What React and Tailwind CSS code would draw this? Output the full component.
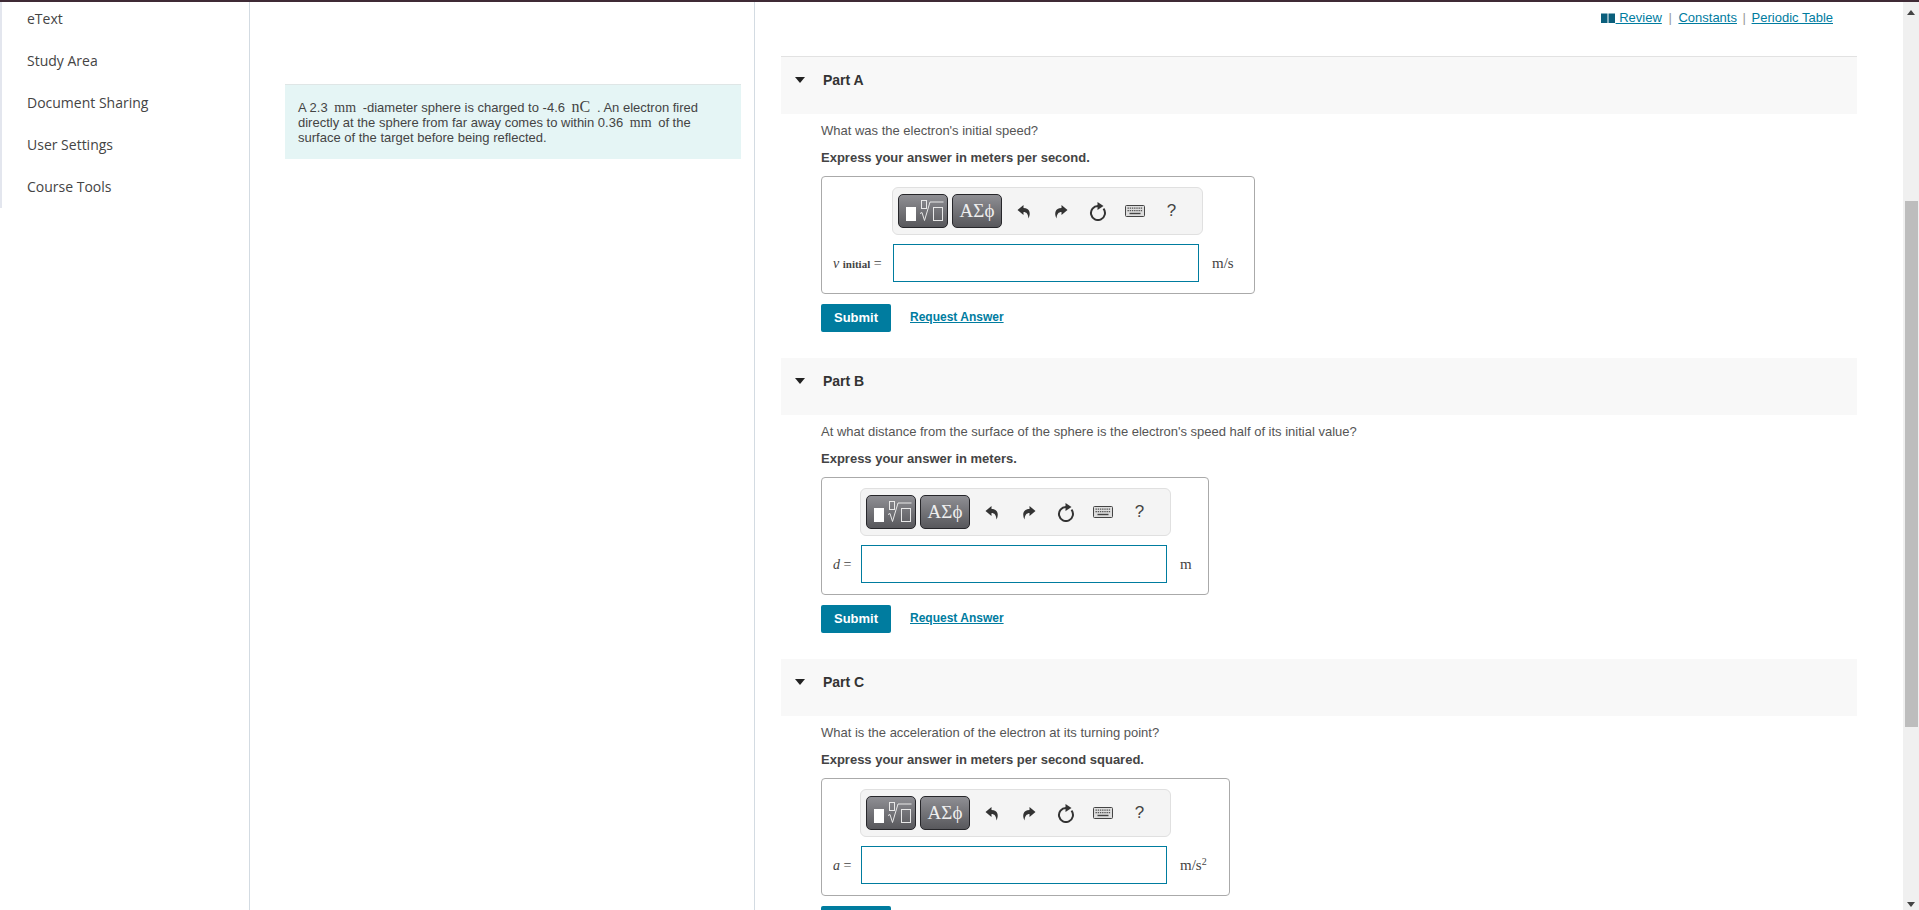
const navItems = ['eText', 'Study Area', 'Document Sharing', 'User Settings', 'Course Tools']

function TemplatesIcon() {
  return (
    <svg width="48" height="32" viewBox="0 0 48 32" fill="none">
      <rect x="7" y="12" width="10" height="14" fill="#fff" />
      <rect x="22.500" y="5.500" width="5" height="8" stroke="#e8e8e8" />
      <path d="M21 18.500l2-1 2.500 8 5.500-18.500H44.500" stroke="#e8e8e8" strokeWidth="1" />
      <rect x="34.500" y="12.500" width="9" height="13" stroke="#e8e8e8" />
    </svg>
  )
}

function UndoIcon() {
  return (
    <svg width="14" height="15" viewBox="0 0 14 15">
      <path d="M6.500 1L0.500 6l6 5V8c3 0 4.600 2 5 6.500C14 9.500 13 4 6.500 4z" fill="#333" />
    </svg>
  )
}

function RedoIcon() {
  return (
    <svg width="14" height="15" viewBox="0 0 14 15">
      <path d="M7.500 1l6 5-6 5V8c-3 0-4.600 2-5 6.500C0 9.500 1 4 7.500 4z" fill="#333" />
    </svg>
  )
}

function ResetIcon() {
  return (
    <svg width="18" height="20" viewBox="0 0 18 20" fill="none">
      <path d="M9 5A7 7 0 1 0 14.500 7.700" stroke="#333" strokeWidth="2" />
      <path d="M8.500 1l6 4-6 4z" fill="#333" />
    </svg>
  )
}

function KeyboardIcon() {
  return (
    <svg width="20" height="12" viewBox="0 0 20 12" fill="none">
      <rect x="0.500" y="0.500" width="19" height="11" rx="1" fill="#ddd" stroke="#444" />
      <path d="M2.500 3.200h15M2.500 5.700h15" stroke="#555" strokeWidth="1.300" strokeDasharray="1.400 0.800" />
      <path d="M4.500 8.500h11" stroke="#444" strokeWidth="1.400" />
    </svg>
  )
}

function BookIcon() {
  return (
    <svg width="14" height="10" viewBox="0 0 14 10" className="inline-block">
      <path d="M0 0.500h6.500V10H0zM7.500 0.500H14V10H7.500z" fill="#0b5f7c" />
    </svg>
  )
}

function Toolbar() {
  return (
    <div className="flex items-center w-[311px] h-[48px] pl-[5px] rounded-md border border-[#e0e0e0] bg-[#f4f4f4]">
      <div className="flex items-center justify-center w-[50px] h-[34px] rounded-[5px] border border-[#26262a] bg-gradient-to-b from-[#8f8f94] to-[#58585c]">
        <TemplatesIcon />
      </div>
      <div className="flex items-center justify-center w-[50px] h-[34px] ml-[4px] rounded-[5px] border border-[#26262a] bg-gradient-to-b from-[#8f8f94] to-[#58585c] text-[#eeeeee] text-[19px] font-['Liberation_Serif',serif]">
        ΑΣϕ
      </div>
      <div className="flex items-center ml-[3px] text-[#333]">
        <div className="flex justify-center w-[37px]"><UndoIcon /></div>
        <div className="flex justify-center w-[37px]"><RedoIcon /></div>
        <div className="flex justify-center w-[37px]"><ResetIcon /></div>
        <div className="flex justify-center w-[37px]"><KeyboardIcon /></div>
        <div className="flex justify-center w-[37px] text-[17px] text-[#444]">?</div>
      </div>
    </div>
  )
}

function Part({ title, question, express, boxClass, colsClass, label, unit, className }) {
  return (
    <section className={className}>
      <div className="flex h-[57px] pt-[15px] bg-[#f8f8f8]">
        <svg width="10" height="6" viewBox="0 0 10 6" className="ml-[14px] mt-[5px]">
          <path d="M0 0h10L5 6z" fill="#222" />
        </svg>
        <h2 className="ml-[18px] text-[14px] leading-[16px] font-bold text-[#333]">{title}</h2>
      </div>
      <div className="pl-[40px]">
        <p className="mt-[9px] text-[13px] leading-[16px] text-[#555]">{question}</p>
        <p className="mt-[11px] text-[13px] leading-[16px] font-bold text-[#444]">{express}</p>
        <div className={`mt-[10px] rounded-[4px] border border-[#aaaaaa] pt-[10px] pb-[11px] grid ${colsClass} ${boxClass}`}>
          <div />
          <Toolbar />
          <div />
          <div className="mt-[9px] pl-[11px] flex items-center text-[14px] text-[#444] font-['Liberation_Serif',serif] whitespace-nowrap">{label}</div>
          <div className="mt-[9px] ml-px w-[306px] h-[38px] border border-[#007c9f] bg-white" />
          <div className="mt-[9px] flex items-center pl-[9px] text-[15px] text-[#444] font-['Liberation_Serif',serif]">{unit}</div>
        </div>
        <div className="flex mt-[10px]">
          <button className="w-[70px] h-[28px] rounded-[2px] bg-[#007c9f] text-white text-[13px] font-bold">Submit</button>
          <a className="ml-[19px] mt-[6px] text-[12px] leading-[14px] font-bold text-[#007c9f] underline">Request Answer</a>
        </div>
      </div>
    </section>
  )
}

export default function App() {
  return (
    <div className="h-[910px] overflow-hidden bg-white font-['Liberation_Sans',Arial,sans-serif]">
      <div className="h-[2px] bg-[#3f2a35]" />
      <div className="flex h-[908px]">
        <aside className="w-[250px] shrink-0 border-r border-[#d3dbe2]">
          <nav className="w-full h-[206px] border-l-2 border-[#e3e6ee] pl-[25px] font-['Open_Sans',sans-serif] text-[14px] text-[#444]">
            {navItems.map(item => (
              <div key={item} className="h-[42px] pt-[7px] leading-[20px]">{item}</div>
            ))}
          </nav>
        </aside>

        <div className="w-[505px] shrink-0 border-r border-[#d3dbe2] pl-[35px] pt-[82px]">
          <div className="w-[456px] h-[75px] border-t border-[#dfe6e6] bg-[#e5f5f5] pl-[13px] pt-[14px] text-[13px] leading-[15px] text-[#444] whitespace-nowrap">
            A 2.3 <span className="font-['Liberation_Serif',serif] text-[14px] mx-[3px]">mm</span> -diameter sphere is charged to -4.6 <span className="font-['Liberation_Serif',serif] text-[16px] mx-[3px]">nC</span> . An electron fired<br />
            directly at the sphere from far away comes to within 0.36 <span className="font-['Liberation_Serif',serif] text-[14px] mx-[3px]">mm</span> of the<br />
            surface of the target before being reflected.
          </div>
        </div>

        <main className="flex-1 min-w-0 pl-[26px] pr-[46px]">
          <div className="flex items-center justify-end h-[55px] pb-[22px] border-b border-[#e2e2e2] pr-[24px] text-[13px] text-[#007c9f] whitespace-pre">
            <BookIcon />
            <a className="underline ml-[1px]"> Review</a>
            <span className="text-[#999] mx-[3px]"> | </span>
            <a className="underline">Constants</a>
            <span className="text-[#999] mx-[2px]"> | </span>
            <a className="underline">Periodic Table</a>
          </div>
          <Part
            title="Part A"
            question="What was the electron's initial speed?"
            express="Express your answer in meters per second."
            boxClass="w-[434px]"
            colsClass="grid-cols-[70px_311px_1fr]"
            label={<><i>v</i>&nbsp;<span className="text-[11px] font-bold mt-[3px]">initial</span>&nbsp;=</>}
            unit="m/s"
            className="h-[301px]"
          />
          <Part
            title="Part B"
            question="At what distance from the surface of the sphere is the electron's speed half of its initial value?"
            express="Express your answer in meters."
            boxClass="w-[388px]"
            colsClass="grid-cols-[38px_311px_1fr]"
            label={<><i>d</i>&nbsp;=</>}
            unit="m"
            className="h-[301px]"
          />
          <Part
            title="Part C"
            question="What is the acceleration of the electron at its turning point?"
            express="Express your answer in meters per second squared."
            boxClass="w-[409px]"
            colsClass="grid-cols-[38px_311px_1fr]"
            label={<><i>a</i>&nbsp;=</>}
            unit={<span>m/s<sup className="text-[10px]">2</sup></span>}
          />
        </main>

        <div className="flex flex-col items-center justify-between w-[16px] shrink-0 bg-[#f0f0f0] pt-[8px] pb-[3px]">
          <svg width="8" height="5" viewBox="0 0 8 5"><path d="M0 5h8L4 0z" fill="#444" /></svg>
          <div className="w-[13px] h-[526px] mt-[177px] mb-[167px] ml-px bg-[#bdbdbd]" />
          <svg width="8" height="5" viewBox="0 0 8 5"><path d="M0 0h8L4 5z" fill="#444" /></svg>
        </div>
      </div>
    </div>
  )
}
